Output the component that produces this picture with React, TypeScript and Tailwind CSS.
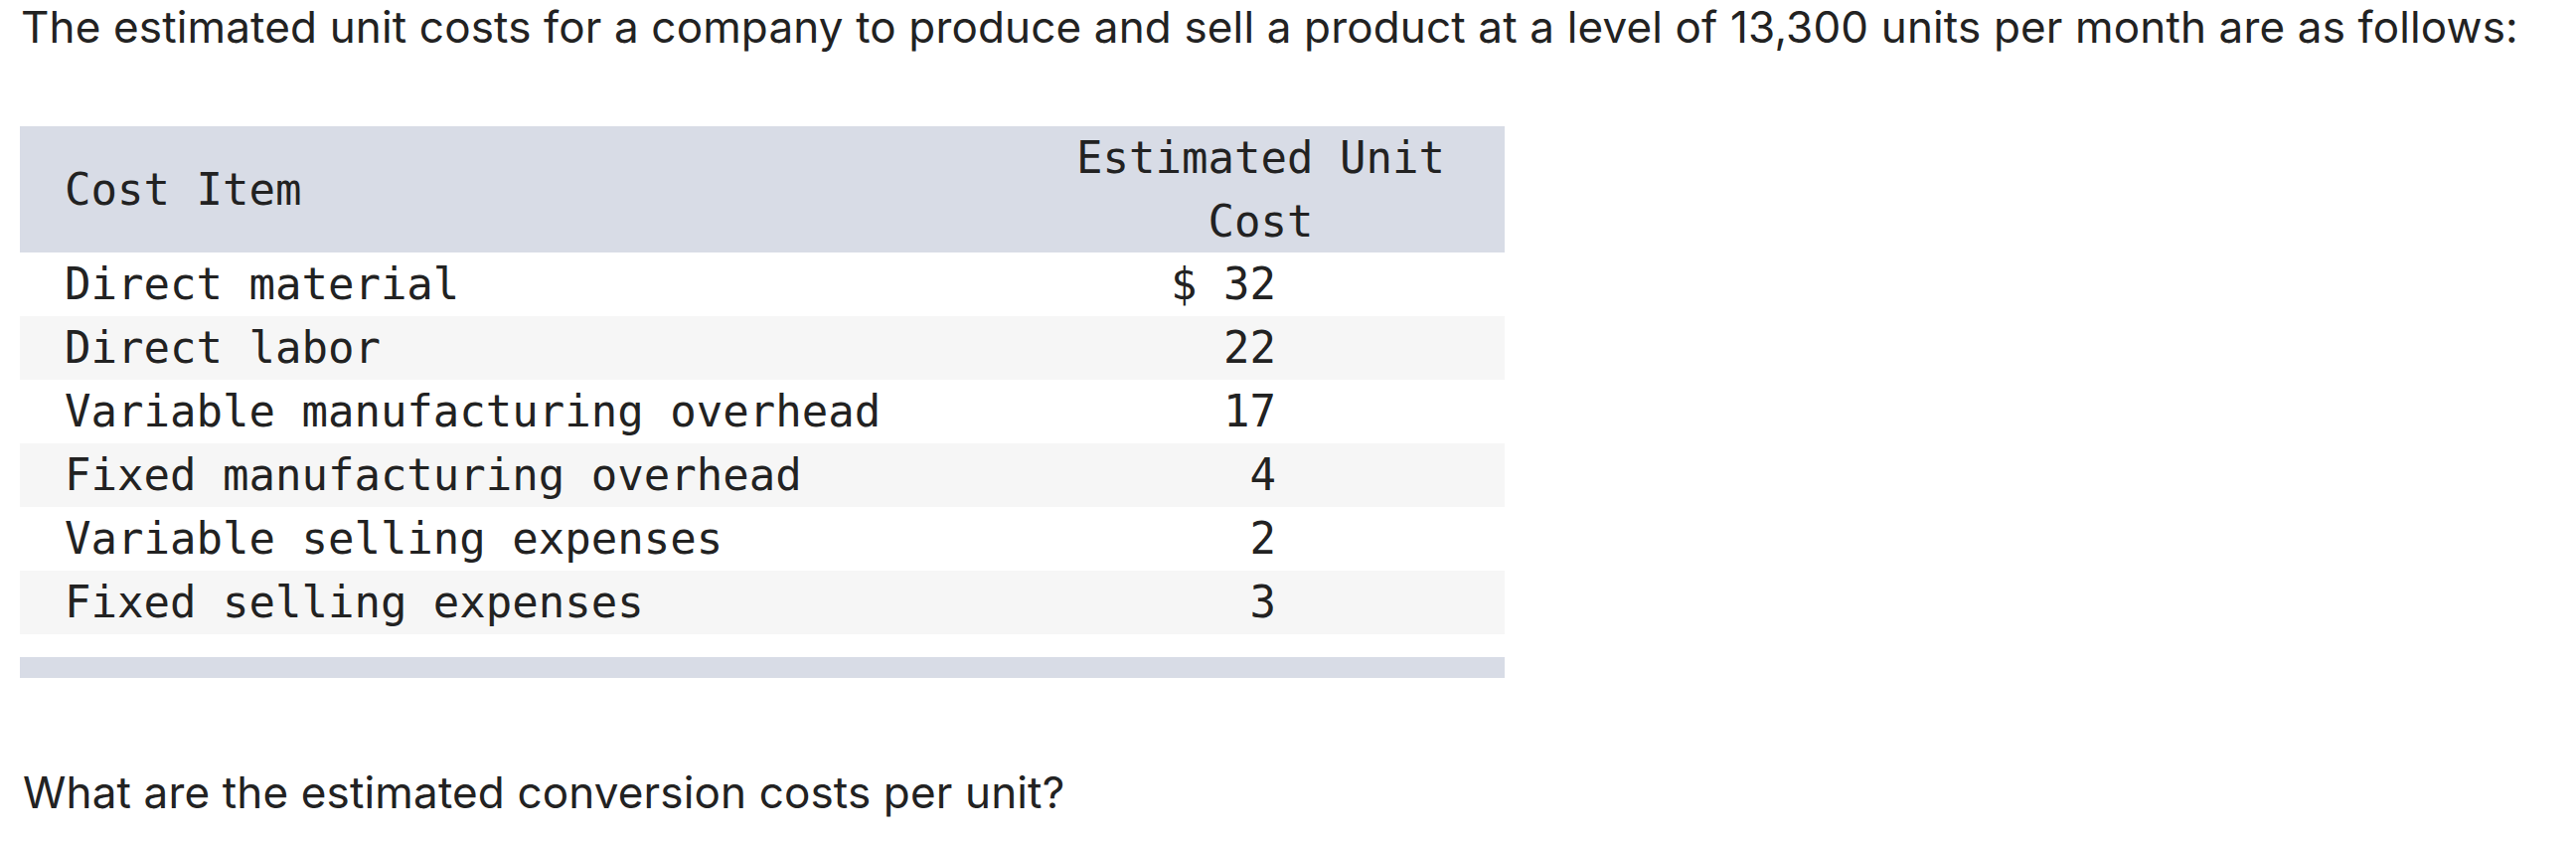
type CostRow = {
  item: string;
  cost: string;
};

const rows: CostRow[] = [
  { item: "Direct material", cost: "$ 32" },
  { item: "Direct labor", cost: "22" },
  { item: "Variable manufacturing overhead", cost: "17" },
  { item: "Fixed manufacturing overhead", cost: "4" },
  { item: "Variable selling expenses", cost: "2" },
  { item: "Fixed selling expenses", cost: "3" },
];

export default function App() {
  return (
    <main className="min-h-screen bg-white text-[#222]">
      <p className="pl-[21px] font-['Inter',sans-serif] text-[44px] leading-[54px] tracking-[0.15px] whitespace-nowrap">
        The estimated unit costs for a company to produce and sell a product at a level of 13,300 units per month are
        as follows:
      </p>

      <div className="ml-[20px] mt-[73px] w-[1494px] font-['DejaVu_Sans_Mono',monospace] text-[44px]">
        <div className="flex h-[127px] items-center bg-[#d8dce6] leading-[63.5px]">
          <div className="flex-1 pl-[45px]">Cost Item</div>
          <div className="w-[491px] text-center">
            Estimated Unit
            <br />
            Cost
          </div>
        </div>

        {rows.map((r, i) => (
          <div
            key={r.item}
            className={[
              "flex h-[64px] items-center leading-[64px] whitespace-pre",
              i % 2 === 1 ? "bg-[#f6f6f6]" : "bg-white",
            ].join(" ")}
          >
            <div className="flex-1 pl-[45px]">{r.item}</div>
            <div className="w-[491px] pr-[230px] text-right">{r.cost}</div>
          </div>
        ))}

        <div className="mt-[23px] h-[21px] bg-[#d8dce6]" />
      </div>

      <p className="mt-[88px] pl-[23px] font-['Inter',sans-serif] text-[44px] leading-[54px] tracking-[0.15px]">
        What are the estimated conversion costs per unit?
      </p>
    </main>
  );
}
